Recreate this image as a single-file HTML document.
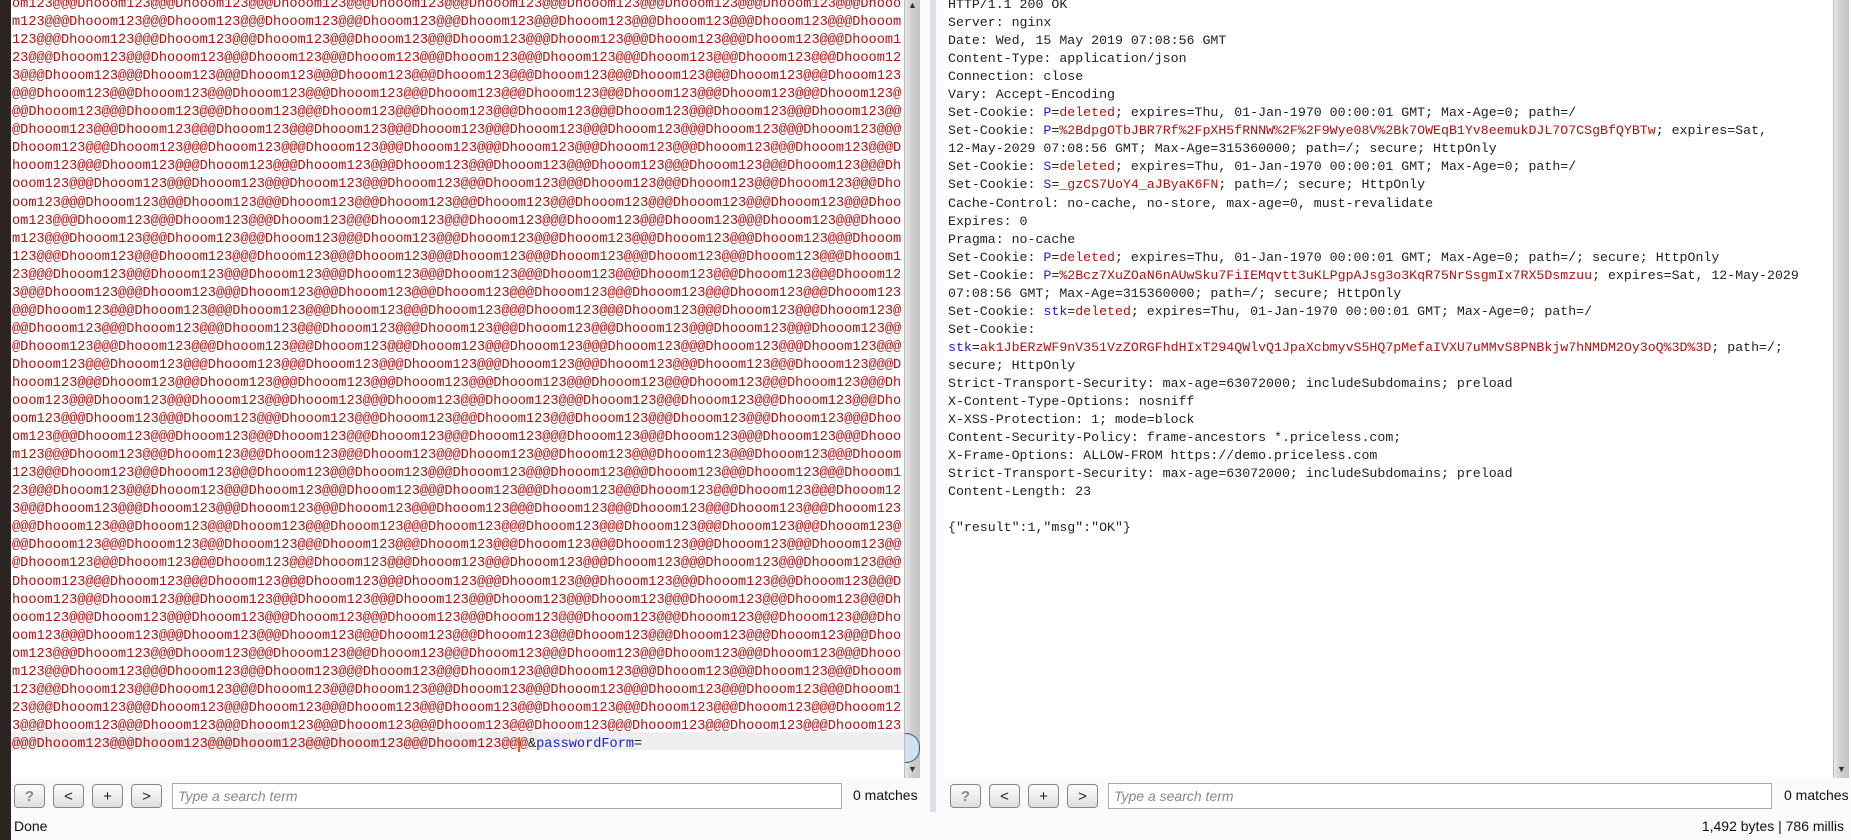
<!DOCTYPE html>
<html><head><meta charset="utf-8"><style>
body{margin:0;width:1851px;height:840px;overflow:hidden;background:#fafafa;font-family:"Liberation Sans",sans-serif;position:relative}
.pane{position:absolute;top:0;height:778px;background:#fff;overflow:hidden}
.mono{font-family:"Liberation Mono",monospace;font-size:13.25px;line-height:18.05px;white-space:pre;position:absolute;top:-4px}
.r{color:#b21212}.b{color:#1a1ae0}.k{color:#222}
.sb{position:absolute;top:0;width:15px;height:778px;background:linear-gradient(90deg,#e8e8e8,#d0d0d0 40%,#c4c4c4);border-left:1px solid #bbb}
.btn{position:absolute;top:784px;width:31px;height:24px;border:1px solid #888;border-radius:4px;background:linear-gradient(#fdfdfd,#dcdfe3);font-size:15px;text-align:center;line-height:23px;color:#222;box-sizing:border-box}
.inp{position:absolute;top:783px;height:26px;border:1px solid #aaa;background:#fff;box-sizing:border-box;font-size:14px;font-style:italic;color:#888;padding-left:5px;line-height:24px}
.t{position:absolute;font-size:14px;color:#111}
.cur{border-right:2px solid #f05a20}
</style></head><body>
<div style="position:absolute;left:0;top:0;width:11px;height:840px;background:#2b2422"></div>
<div class="pane" style="left:11px;width:893px">
<div style="position:absolute;left:0;top:732px;width:893px;height:18px;background:#efefef"></div>
<div class="mono r" id="L" style="left:1px;font-size:13.6px"></div>
</div>
<div class="sb" style="left:904px"><div style="position:absolute;top:0;left:0;width:15px;height:14px;font-size:9px;text-align:center;color:#333">▲</div>
<div style="position:absolute;top:733px;left:0;width:14px;height:28px;border:1px solid #456;border-left:none;border-radius:0 14px 14px 0;background:#cfe0f0"></div>
<div style="position:absolute;top:764px;left:0;width:15px;height:14px;font-size:9px;text-align:center;color:#333">▼</div></div>
<div style="position:absolute;left:930px;top:0;width:6px;height:812px;background:#dde0e6"></div>
<div class="pane" style="left:944px;width:889px">
<div class="mono k" style="left:4px">HTTP/1.1 200 OK
Server: nginx
Date: Wed, 15 May 2019 07:08:56 GMT
Content-Type: application/json
Connection: close
Vary: Accept-Encoding
Set-Cookie: <span class="b">P</span>=<span class="r">deleted</span>; expires=Thu, 01-Jan-1970 00:00:01 GMT; Max-Age=0; path=/
Set-Cookie: <span class="b">P</span>=<span class="r">%2BdpgOTbJBR7Rf%2FpXH5fRNNW%2F%2F9Wye08V%2Bk7OWEqB1Yv8eemukDJL7O7CSgBfQYBTw</span>; expires=Sat,
12-May-2029 07:08:56 GMT; Max-Age=315360000; path=/; secure; HttpOnly
Set-Cookie: <span class="b">S</span>=<span class="r">deleted</span>; expires=Thu, 01-Jan-1970 00:00:01 GMT; Max-Age=0; path=/
Set-Cookie: <span class="b">S</span>=<span class="r">_gzCS7UoY4_aJByaK6FN</span>; path=/; secure; HttpOnly
Cache-Control: no-cache, no-store, max-age=0, must-revalidate
Expires: 0
Pragma: no-cache
Set-Cookie: <span class="b">P</span>=<span class="r">deleted</span>; expires=Thu, 01-Jan-1970 00:00:01 GMT; Max-Age=0; path=/; secure; HttpOnly
Set-Cookie: <span class="b">P</span>=<span class="r">%2Bcz7XuZOaN6nAUwSku7FiIEMqvtt3uKLPgpAJsg3o3KqR75NrSsgmIx7RX5Dsmzuu</span>; expires=Sat, 12-May-2029
07:08:56 GMT; Max-Age=315360000; path=/; secure; HttpOnly
Set-Cookie: <span class="b">stk</span>=<span class="r">deleted</span>; expires=Thu, 01-Jan-1970 00:00:01 GMT; Max-Age=0; path=/
Set-Cookie: 
<span class="b">stk</span>=<span class="r">ak1JbERzWF9nV351VzZORGFhdHIxT294QWlvQ1JpaXcbmyvS5HQ7pMefaIVXU7uMMvS8PNBkjw7hNMDM2Oy3oQ%3D%3D</span>; path=/;
secure; HttpOnly
Strict-Transport-Security: max-age=63072000; includeSubdomains; preload
X-Content-Type-Options: nosniff
X-XSS-Protection: 1; mode=block
Content-Security-Policy: frame-ancestors *.priceless.com;
X-Frame-Options: ALLOW-FROM https://demo.priceless.com
Strict-Transport-Security: max-age=63072000; includeSubdomains; preload
Content-Length: 23

{"result":1,"msg":"OK"}</div>
</div>
<div class="sb" style="left:1833px"><div style="position:absolute;top:764px;left:0;width:15px;height:14px;font-size:9px;text-align:center;color:#333">▼</div></div>

<div class="btn" style="left:14px;color:#888;font-weight:bold">?</div>
<div class="btn" style="left:53px">&lt;</div>
<div class="btn" style="left:92px">+</div>
<div class="btn" style="left:131px">&gt;</div>
<div class="inp" style="left:172px;width:670px">Type a search term</div>
<div class="t" style="left:853px;top:787px">0 matches</div>

<div class="btn" style="left:950px;color:#888;font-weight:bold">?</div>
<div class="btn" style="left:989px">&lt;</div>
<div class="btn" style="left:1028px">+</div>
<div class="btn" style="left:1067px">&gt;</div>
<div class="inp" style="left:1108px;width:664px">Type a search term</div>
<div class="t" style="left:1784px;top:787px">0 matches</div>

<div class="t" style="left:14px;top:818px">Done</div>
<div class="t" style="right:7px;top:818px">1,492 bytes | 786 millis</div>
<script>
var u="Dhooom123@@@",s="",out=[];
for(var i=0;i<500;i++)s+=u;
var off=4;
for(var l=0;l<41;l++){out.push(s.substr(off,109));off=(off+109)%12;}
var last=s.substr(off,62);
document.getElementById('L').innerHTML=out.join("\n")+"\n"+'<span class="cur">'+last+'</span>@<span style="color:#222">&amp;</span><span class="b">passwordForm</span><span style="color:#222">=</span>';
</script>
</body></html>
